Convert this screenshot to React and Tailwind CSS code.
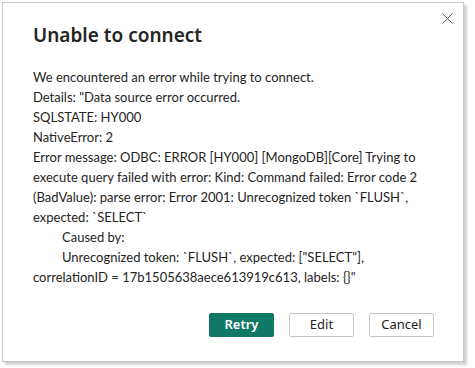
import React from 'react';

const lines = [
    'We encountered an error while trying to connect.',
    'Details: "Data source error occurred.',
    'SQLSTATE: HY000',
    'NativeError: 2',
    'Error message: ODBC: ERROR [HY000] [MongoDB][Core] Trying to',
    'execute query failed with error: Kind: Command failed: Error code 2',
    '(BadValue): parse error: Error 2001: Unrecognized token `FLUSH`,',
    'expected: `SELECT`',
];

const App = () => {
    return (
        <div className="w-[475px] h-[368px] bg-white pt-[2px] pl-[2px] font-['Lato',sans-serif] text-[#252423]">
            <div className="relative w-[462px] h-[360px] bg-white border border-[#c8c8c8] shadow-[3px_3px_2px_rgba(0,0,0,0.18)] flex flex-col">

                <button className="absolute right-[8px] top-[7px] w-[16px] h-[16px] flex items-center justify-center text-[#605e5c]">
                    <svg width="11" height="11" viewBox="0 0 11 11" fill="none" stroke="currentColor" strokeWidth="1">
                        <path d="M0.5 0.5 L10.5 10.5 M10.5 0.5 L0.5 10.5" />
                    </svg>
                </button>

                <h1 className="pl-[30px] pt-[19px] text-[19px] leading-[26px] font-semibold text-[#252423] font-['Noto_Sans',sans-serif]">
                    Unable to connect
                </h1>

                <div className="pl-[30px] pr-[20px] mt-[19px] text-[13px] leading-[20px]">
                    {lines.map((line) => (
                        <p key={line} className="whitespace-nowrap">{line}</p>
                    ))}
                    <p className="pl-[29px] whitespace-nowrap">Caused by:</p>
                    <p className="pl-[29px] whitespace-nowrap">Unrecognized token: `FLUSH`, expected: ["SELECT"],</p>
                    <p className="whitespace-nowrap">correlationID = 17b1505638aece613919c613, labels: {'{}'}"</p>
                </div>

                <div className="flex justify-end gap-[15px] pr-[29px] mt-auto mb-[24px] text-[13px] font-['Noto_Sans',sans-serif]">
                    <button className="w-[65px] h-[24px] rounded-[2px] bg-[#117865] text-white font-semibold">
                        Retry
                    </button>
                    <button className="w-[65px] h-[24px] rounded-[2px] border border-[#c8c6c4] bg-white">
                        Edit
                    </button>
                    <button className="w-[65px] h-[24px] rounded-[2px] border border-[#c8c6c4] bg-white">
                        Cancel
                    </button>
                </div>

            </div>
        </div>
    );
};

export default App;
